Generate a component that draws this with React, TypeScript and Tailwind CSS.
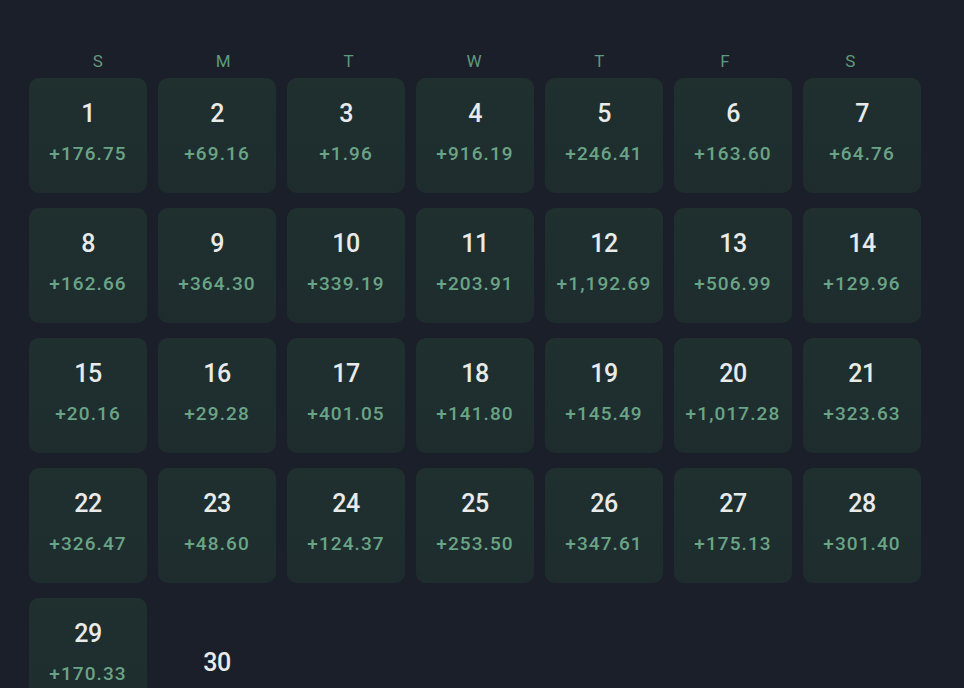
const days = ["S", "M", "T", "W", "T", "F", "S"];

const values: (string | null)[] = [
  "+176.75", "+69.16", "+1.96", "+916.19", "+246.41", "+163.60", "+64.76",
  "+162.66", "+364.30", "+339.19", "+203.91", "+1,192.69", "+506.99", "+129.96",
  "+20.16", "+29.28", "+401.05", "+141.80", "+145.49", "+1,017.28", "+323.63",
  "+326.47", "+48.60", "+124.37", "+253.50", "+347.61", "+175.13", "+301.40",
  "+170.33", null,
];

export default function App() {
  return (
    <div
      className="w-[964px] h-[688px] overflow-hidden bg-[#1b1f29] pt-[50px]"
      style={{ fontFamily: "Roboto, 'DejaVu Sans', sans-serif" }}
    >
      {/* weekday header */}
      <div className="ml-[35px] w-[878px] grid grid-cols-7 h-[22px] items-center">
        {days.map((d, i) => (
          <div key={i} className="text-center text-[17px] text-[#5f9a7c] leading-none">
            {d}
          </div>
        ))}
      </div>

      {/* days */}
      <div className="ml-[29px] mt-[6px] w-[892px] grid grid-cols-[repeat(7,118px)] gap-x-[11px] gap-y-[15px] auto-rows-[115px]">
        {values.map((v, i) =>
          v ? (
            <div
              key={i}
              className="rounded-[10px] bg-gradient-to-b from-[#1f302f] to-[#1e2c2d] flex flex-col items-center pt-[22px]"
            >
              <div className="text-[25px] leading-[28px] font-medium text-[#e8ebea] tracking-[-0.5px]">
                {i + 1}
              </div>
              <div className="mt-[15px] text-[19px] leading-[22px] font-medium text-[#6aa486] tracking-[1.1px]">
                {v}
              </div>
            </div>
          ) : (
            <div key={i} className="flex flex-col items-center pt-[51px]">
              <div className="text-[25px] leading-[28px] font-medium text-[#e8ebea] tracking-[-0.5px]">
                {i + 1}
              </div>
            </div>
          )
        )}
      </div>
    </div>
  );
}
